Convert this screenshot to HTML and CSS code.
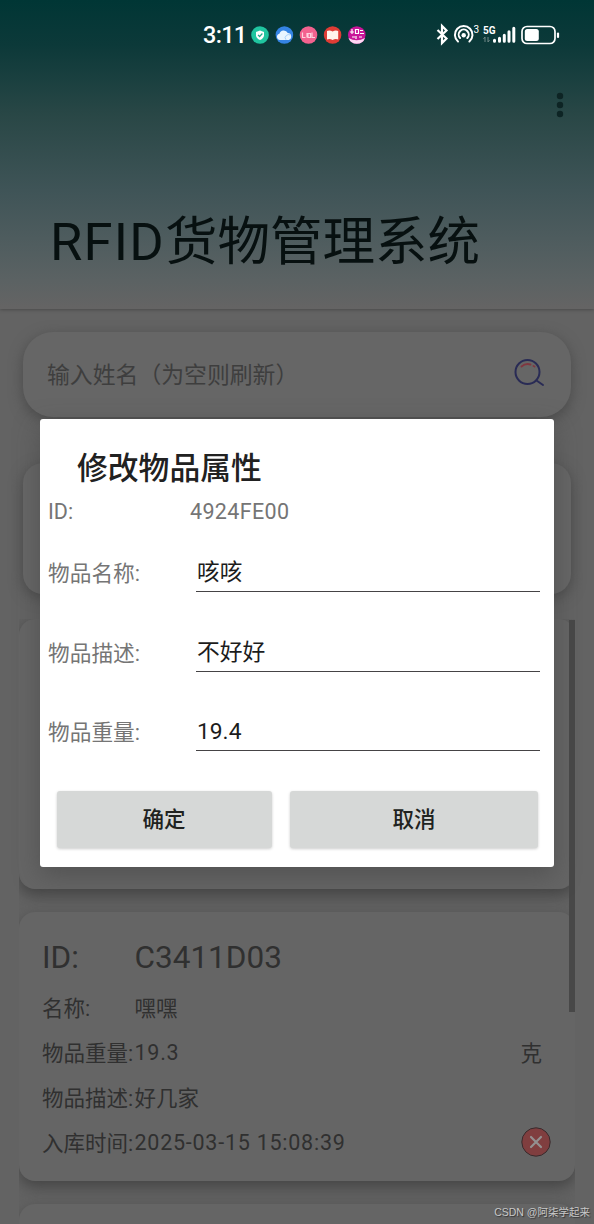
FILE: index.html
```html
<!DOCTYPE html>
<html lang="zh-CN">
<head>
<meta charset="utf-8">
<title>RFID货物管理系统</title>
<link rel="stylesheet" href="styles.css">
</head>
<body>
<div class="screen">
  <header class="appbar">
    <div class="status">
      <span class="clock">3:11</span>
      <svg class="apps" width="116" height="20" viewBox="0 0 116 20">
        <circle cx="10" cy="10" r="8.8" fill="#20c5a0"/>
        <path d="M10 5.5 14 7v3.2c0 2.2-1.6 3.8-4 4.8-2.400-1-4-2.600-4-4.800V7z" fill="#fff"/>
        <path d="m8 9.800 1.600 1.700 2.800-3" fill="none" stroke="#20a98b" stroke-width="1.200"/>
        <circle cx="34.400" cy="10" r="8.800" fill="#3584e4"/>
        <path d="M30 15a3.200 3.200 0 0 1-.6-6.300 4.500 4.500 0 0 1 8.400-.7 3.600 3.600 0 0 1 1 7z" fill="#eaf5ff"/>
        <path d="M36 14.800a3 3 0 0 1 .3-4.300 3.500 3.500 0 0 1 4-.5" fill="none" stroke="#a9d2fb"/>
        <circle cx="58.500" cy="10" r="8.800" fill="#f3628f"/>
        <path d="M52.500 7.500v5h3M57 8v4.500M58 8.500h2.500v4H58zM62 7.500v5h3" fill="none" stroke="#ffd1df" stroke-width="1.200"/>
        <circle cx="82.600" cy="10" r="8.800" fill="#df3c35"/>
        <path d="M77 6q2.800-1 5.600.5 2.800-1.500 5.600-.5v8.500q-2.800-1-5.600.5-2.800-1.500-5.600-.5z" fill="#fff4ec"/>
        <circle cx="106.800" cy="10" r="8.800" fill="#c91499"/>
        <path d="M100 7h4m-2-3v5M105.500 4.500v4h3v-4zM110 5.500h3m-3 3h4M102 12h3m1-1v3m3-2h3" fill="none" stroke="#fff" stroke-width="1.200"/>
        <path d="M98.500 13q8 4.500 16.500 0-2 5.800-8.200 5.800T98.500 13" fill="#ffd7f3"/>
      </svg>
      <svg class="signals" width="126" height="26" viewBox="0 0 126 26" fill="none" stroke="#fff">
        <path d="m2.500 9 9 8.500-4.500 4.500V5l4.500 4.500-9 8.500" stroke-width="2.200"/>
        <g stroke-width="2" stroke-linecap="round"><path d="M23 20.500a8.800 8.800 0 1 1 11.400 0"/><path d="M25.100 17a5 5 0 1 1 7.200 0"/></g>
        <circle cx="28.700" cy="14.300" r="2.200" fill="#fff" stroke="none"/>
        <text x="38.500" y="11.500" class="tiny">3</text>
        <text x="48" y="13" class="network">5G</text>
        <path d="M50 21v-5l-1.500 2M53 16v5l1.500-2" stroke="#6f8786"/>
        <g stroke-width="3" stroke-linecap="round"><path d="M59.500 19.300v1M64.500 17.300v3M69.300 14.300v6M74 10.800v9.500M78.800 7.300v13"/></g>
        <rect x="87" y="5.500" width="33" height="17" rx="5" stroke-width="1.700"/>
        <rect x="89.800" y="8" width="14" height="12" rx="2.500" fill="#fff" stroke="none"/>
        <path d="M123 12.500v3.500" stroke-width="2.200" stroke-linecap="round"/>
      </svg>
    </div>
    <svg class="more" width="8" height="26" viewBox="0 0 8 26" fill="#0d2424"><circle cx="4" cy="4" r="3.200"/><circle cx="4" cy="13" r="3.200"/><circle cx="4" cy="22" r="3.200"/></svg>
    <h1 class="heading"><span class="latin">RFID</span>货物管理系统</h1>
  </header>

  <main class="content">
    <div class="search">
      <span>输入姓名（为空则刷新）</span>
      <svg width="34" height="30" viewBox="0 0 34 30" fill="none" stroke-linecap="round"><circle cx="15.500" cy="14" r="12" stroke="#292b55" stroke-width="2"/><path d="m24.500 22.500 6.500 4.500" stroke="#292b55" stroke-width="2"/><path d="M9.500 8.500q4-3.500 9-2M21.500 8l1 .5" stroke="#803740" stroke-width="1.900"/></svg>
    </div>
    <div class="panel"></div>
    <div class="list">
      <article class="card first"></article>
      <article class="card">
        <div class="row id"><span class="key">ID:</span><span class="val">C3411D03</span></div>
        <div class="row"><span class="key">名称:</span><span>嘿嘿</span></div>
        <div class="row"><span class="key">物品重量:</span><span class="num">19.3</span><span class="unit">克</span></div>
        <div class="row"><span class="key">物品描述:</span><span>好几家</span></div>
        <div class="row"><span class="key">入库时间:</span><span class="num">2025-03-15 15:08:39</span>
          <svg class="remove" width="30" height="30" viewBox="0 0 30 30"><circle cx="15" cy="15" r="14.200" fill="#803e3f" stroke="#382b2d" stroke-width="1"/><path d="m10 10 10 10m0-10L10 20" stroke="#939090" stroke-width="2.200" stroke-linecap="round"/></svg>
        </div>
      </article>
      <article class="card last"></article>
      <i class="scrollbar"></i>
    </div>
  </main>

  <section class="dialog">
    <h2>修改物品属性</h2>
    <div class="idline"><span>ID:</span><span class="idvalue">4924FE00</span></div>
    <div class="field"><label>物品名称:</label><div class="input">咳咳</div></div>
    <div class="field"><label>物品描述:</label><div class="input">不好好</div></div>
    <div class="field"><label>物品重量:</label><div class="input">19.4</div></div>
    <div class="actions"><button>确定</button><button>取消</button></div>
  </section>
  <div class="credit">CSDN @阿柒学起来</div>
</div>
</body>
</html>
```
FILE: styles.css
```css
* { box-sizing: border-box; }
body { margin: 0; }
.screen {
  position: relative;
  width: 594px;
  height: 1224px;
  overflow: hidden;
  display: flex;
  flex-direction: column;
  background: #636363;
  color: #303030;
  font: 21.500px Roboto, "Noto Sans CJK SC", sans-serif;
  white-space: nowrap;
}
h1, h2 { margin: 0; font-weight: 400; }

.appbar {
  height: 309px;
  flex: none;
  display: flex;
  flex-direction: column;
  background: linear-gradient(#003635 0, #0c3939 45px, #294746 115px, #3f5457 190px, #505d5f 245px, #5b6263 280px, #656464 309px);
  box-shadow: 0 1px 3px #4b4b4b;
}
.status { height: 70px; display: flex; align-items: center; padding-left: 203px; color: #fff; }
.clock { width: 47px; font: 500 23.500px Roboto, sans-serif; letter-spacing: -.7px; }
.signals { margin-left: 69px; margin-top: -2px; }
.tiny { font: 10px Roboto, sans-serif; fill: #fff; stroke: none; }
.network { font: 700 10px Roboto, sans-serif; fill: #fff; stroke: none; }
.more { margin: 22px 30px 0 auto; }
.heading { margin: 84px 0 0 50px; font-size: 52.500px; line-height: 80px; color: #071010; }
.latin { letter-spacing: 1.200px; }

.content { flex: 1; display: flex; flex-direction: column; padding-top: 23px; }
.search, .panel { margin: 0 23px; background: #666; box-shadow: 0 4px 14px #4a4a4a; }
.search {
  height: 85px;
  border-radius: 30px;
  display: flex;
  align-items: center;
  justify-content: space-between;
  padding: 0 25px 3px 24px;
  color: #3e3e3e;
  font-size: 22.850px;
}
.panel { height: 131px; margin-top: 46px; border-radius: 20px; }
.list { position: relative; flex: 1; margin: 25px 19px 0; overflow: hidden; }
.card { height: 269px; margin-bottom: 23px; padding: 17px 23px; border-radius: 16px; background: #656565; box-shadow: 0 6px 15px #444; }
.card.first { height: 270px; }
.card.last { margin-bottom: 0; }
.row { display: flex; align-items: center; height: 45px; padding-bottom: 2px; }
.row.id { height: 56px; padding-bottom: 0; font-size: 31.500px; }
.key { width: 92.500px; }
.num { letter-spacing: .75px; padding-top: 1px; }
.unit { margin-left: auto; padding-right: 10px; }
.remove { margin-left: auto; margin-right: 1px; }
.scrollbar { position: absolute; right: 0; top: 1px; width: 6px; height: 392px; background: #484848; }

.dialog {
  position: absolute;
  left: 40px;
  top: 419px;
  width: 514px;
  height: 448px;
  border-radius: 3px;
  background: #fff;
  box-shadow: 0 8px 24px #40404080;
  color: #757575;
}
.dialog h2 { height: 76px; padding: 27px 0 0 37px; font-size: 30.800px; line-height: 46px; font-weight: 500; color: #212121; }
.idline { display: flex; height: 33px; align-items: center; padding-left: 8px; }
.idline span:first-child { width: 142px; }
.idvalue { letter-spacing: .35px; }
.field { display: flex; height: 79.500px; padding: 20px 14px 0 8px; }
.field label { width: 148px; line-height: 51px; font-size: 21.700px; }
.input { flex: 1; height: 44.200px; line-height: 50px; border-bottom: 1.600px solid #454345; font-size: 22.800px; color: #1c1c1c; padding-left: 1px; }
.actions { display: grid; grid-template-columns: 215px 248px; column-gap: 18.500px; padding: 24px 16.500px; }
.actions button { height: 57px; padding: 0 0 4px; border: 0; border-radius: 3px; background: #d6d8d7; box-shadow: 0 1px 3px #0003; font: 500 21.500px Roboto, "Noto Sans CJK SC", sans-serif; color: #202220; }
.credit { position: absolute; right: 4px; bottom: 4px; font: 10.500px/16px "Liberation Sans", "Noto Sans CJK SC", sans-serif; color: #c8c8c8; text-shadow: 1px 1px 1px #333; }
```
